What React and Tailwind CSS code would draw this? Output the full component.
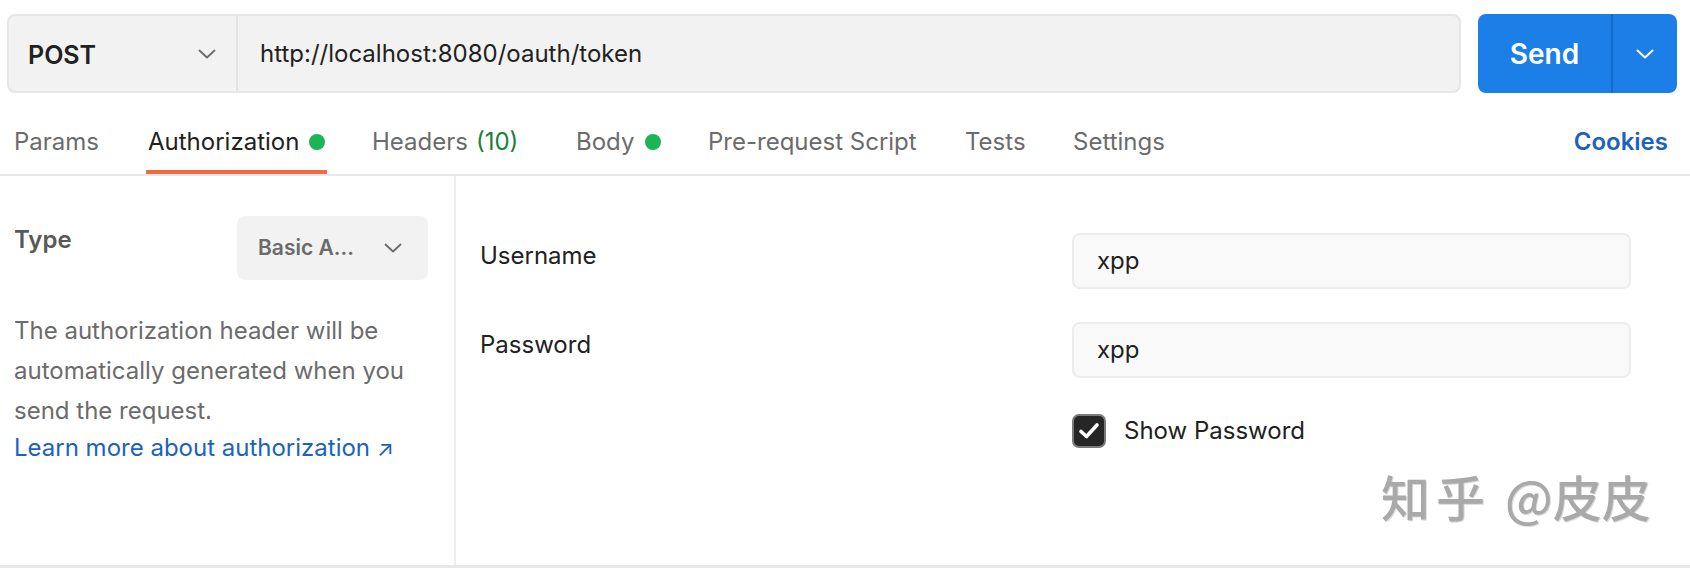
import React from "react";

function Chevron({ className = "", color = "#6b6b6b", w = 18, h = 10, sw = 1.8 }) {
  return (
    <svg width={w} height={h} viewBox="0 0 18 10" className={className} fill="none">
      <polyline points="1.5,1.5 9,8.5 16.5,1.5" stroke={color} strokeWidth={sw} strokeLinecap="round" strokeLinejoin="round" />
    </svg>
  );
}

function Tab({ width, active, children }) {
  return (
    <div className={"flex h-full " + width}>
      <div
        className={
          "flex items-center pt-[20px] px-[2px] border-b-4 " +
          (active ? "border-[#ee6c41] text-[#212121]" : "border-transparent text-[#6b6b6b]")
        }
      >
        {children}
      </div>
    </div>
  );
}

function Dot({ ml = "ml-[10px]" }) {
  return <span className={"inline-block w-[16px] h-[16px] rounded-full bg-[#1bb556] " + ml} />;
}

export default function App() {
  return (
    <div className="relative w-[1690px] h-[568px] bg-white overflow-hidden flex flex-col font-['Inter',sans-serif]">
      {/* URL bar row */}
      <div className="flex pt-[14px] pl-[7px] pr-[13px] gap-[17px]">
        <div className="flex h-[79px] w-[1454px] rounded-[8px] border-2 border-[#e6e6e6] bg-[#f2f2f2]">
          <div className="flex w-[229px] items-center justify-between border-r-2 border-[#e3e3e3] pl-[19px] pr-[20px]">
            <span className="mt-[4px] text-[25px] font-semibold text-[#212121]">POST</span>
            <Chevron />
          </div>
          <div className="flex items-center pl-[22px] text-[24px] text-[#212121]">
            http://localhost:8080/oauth/token
          </div>
        </div>
        <div className="flex h-[79px] w-[199px] rounded-[8px] bg-[#1b7fe7]">
          <div className="flex w-[135px] items-center justify-center border-r-2 border-[#1669cc] text-[28px] font-semibold text-white">
            Send
          </div>
          <div className="flex flex-1 items-center justify-center">
            <Chevron color="#ffffff" w={18} h={10} sw={2} />
          </div>
        </div>
      </div>

      {/* Tabs */}
      <div className="flex h-[83px] items-stretch border-b-2 border-[#e8e8e8] pl-[12px] pr-[22px] text-[24px]">
        <Tab width="w-[134px]">Params</Tab>
        <Tab width="w-[224px]" active>
          Authorization
          <Dot ml="ml-[10px]" />
        </Tab>
        <Tab width="w-[204px]">
          Headers<span className="ml-[8px] text-[#1a7f3c]">(10)</span>
        </Tab>
        <Tab width="w-[132px]">
          Body
          <Dot ml="ml-[11px]" />
        </Tab>
        <Tab width="w-[257px]">Pre-request Script</Tab>
        <Tab width="w-[108px]">Tests</Tab>
        <Tab width="w-[200px]">Settings</Tab>
        <div className="ml-auto flex items-center pt-[16px] text-[24px] font-semibold text-[#1c62bd]">Cookies</div>
      </div>

      {/* Content */}
      <div className="flex flex-1 border-b-[3px] border-[#e8e8e8]">
        {/* Left panel */}
        <div className="w-[456px] shrink-0 border-r-2 border-[#ededed] pl-[14px] pr-[26px] pt-[40px]">
          <div className="flex items-start justify-between">
            <span className="mt-[9px] text-[24px] leading-[29px] font-semibold text-[#595959]">Type</span>
            <div className="flex h-[64px] w-[191px] items-center justify-between rounded-[8px] bg-[#f2f2f2] pl-[21px] pr-[26px]">
              <span className="text-[21px] font-semibold text-[#6b6b6b]">Basic A...</span>
              <Chevron />
            </div>
          </div>
          <p className="mt-[31px] text-[24px] leading-[40px] text-[#6b6b6b]">
            The authorization header will be automatically generated when you send the request.
          </p>
          <div className="text-[24px] leading-[33px] text-[#1c62bd]">
            Learn more about authorization <span className="text-[22px]">↗</span>
          </div>
        </div>

        {/* Right panel */}
        <div className="flex-1 pl-[24px]">
          <div className="mt-[57px] flex items-start">
            <div className="w-[592px] pt-[8px] text-[24px] leading-[29px] text-[#212121]">Username</div>
            <div className="flex h-[56px] w-[559px] items-center rounded-[8px] border-2 border-[#ededed] bg-[#f9f9f9] pl-[23px] text-[24px] text-[#212121]">
              xpp
            </div>
          </div>
          <div className="mt-[33px] flex items-start">
            <div className="w-[592px] pt-[8px] text-[24px] leading-[29px] text-[#212121]">Password</div>
            <div className="flex h-[56px] w-[559px] items-center rounded-[8px] border-2 border-[#ededed] bg-[#f9f9f9] pl-[23px] text-[24px] text-[#212121]">
              xpp
            </div>
          </div>
          <div className="mt-[35px] flex items-center pl-[592px]">
            <div className="flex h-[34px] w-[34px] items-center justify-center rounded-[7px] border-2 border-[#7a7a7a] bg-[#262626]">
              <svg width="22" height="18" viewBox="0 0 22 18" fill="none">
                <polyline points="3,9.5 8.5,14.5 19,3" stroke="#ffffff" strokeWidth="3.6" strokeLinecap="round" strokeLinejoin="round" />
              </svg>
            </div>
            <span className="ml-[18px] text-[24px] text-[#212121]">Show Password</span>
          </div>
        </div>
      </div>

      {/* Watermark */}
      <div className="absolute left-[1381px] top-[466px] flex items-center text-[49px] leading-[60px] font-medium text-[#a9a9a9] font-['Noto_Sans_CJK_SC',sans-serif] [text-shadow:1px_1px_0_#d8d8d8]">
        <span className="tracking-[6px]">知乎</span>
        <span className="ml-[14px]">@皮皮</span>
      </div>
    </div>
  );
}
